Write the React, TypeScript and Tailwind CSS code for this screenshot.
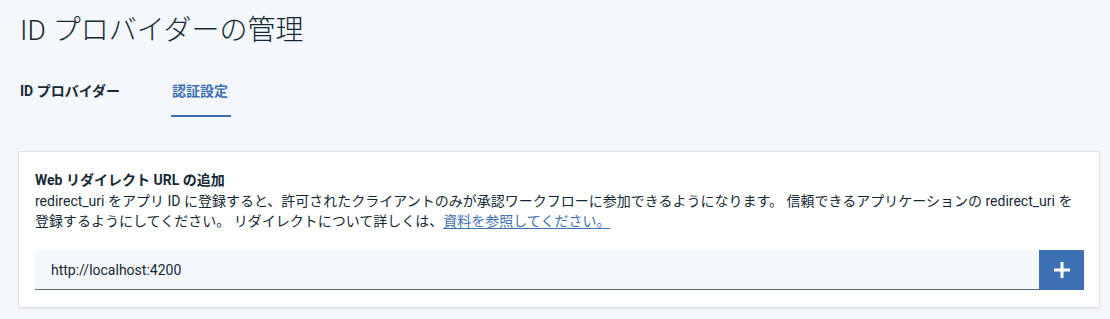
export default function App() {
  const font = { fontFamily: 'Roboto, "Noto Sans CJK JP", sans-serif' }

  return (
    <div className="w-full h-[319px] bg-[#f4f7fb] text-[#152935] overflow-hidden" style={font}>
      <div className="pl-5 pt-[13px] text-[28px] leading-[36px] font-light">ID プロバイダーの管理</div>

      <div className="flex mt-[31px] pl-5 text-sm font-bold">
        <div className="h-[37px] leading-5 w-[151px] pt-px">ID プロバイダー</div>
        <div className="h-[37px] w-[60px] leading-5 pl-px pt-px text-[#3d70b2] border-b-2 border-[#3d70b2]">認証設定</div>
      </div>

      <div className="mt-[34px] ml-[18px] mr-[10px] h-[157px] bg-white border border-[#dfe3e6] shadow-[0_1px_2px_rgba(0,0,0,0.08)] pt-[18px] pl-4 pr-[15px]">
        <div className="text-sm font-bold leading-5">Web リダイレクト URL の追加</div>
        <div className="text-sm leading-5 mt-px">
          redirect_uri をアプリ ID に登録すると、許可されたクライアントのみが承認ワークフローに参加できるようになります。 信頼できるアプリケーションの redirect_uri を
          <br />
          登録するようにしてください。 リダイレクトについて詳しくは、
          <a className="text-[#3d70b2] underline underline-offset-2">資料を参照してください。</a>
        </div>
        <div className="flex mt-[19px]">
          <div className="flex-1 h-10 bg-[#f4f7fb] border-b border-[#5a6872] flex items-center px-4 text-sm">
            http://localhost:4200
          </div>
          <button className="w-[45px] h-10 bg-[#3d70b2] flex items-center justify-center">
            <svg width="16" height="16" viewBox="0 0 16 16">
              <path d="M8 0v16M0 8h16" stroke="white" strokeWidth="3" />
            </svg>
          </button>
        </div>
      </div>
    </div>
  )
}
